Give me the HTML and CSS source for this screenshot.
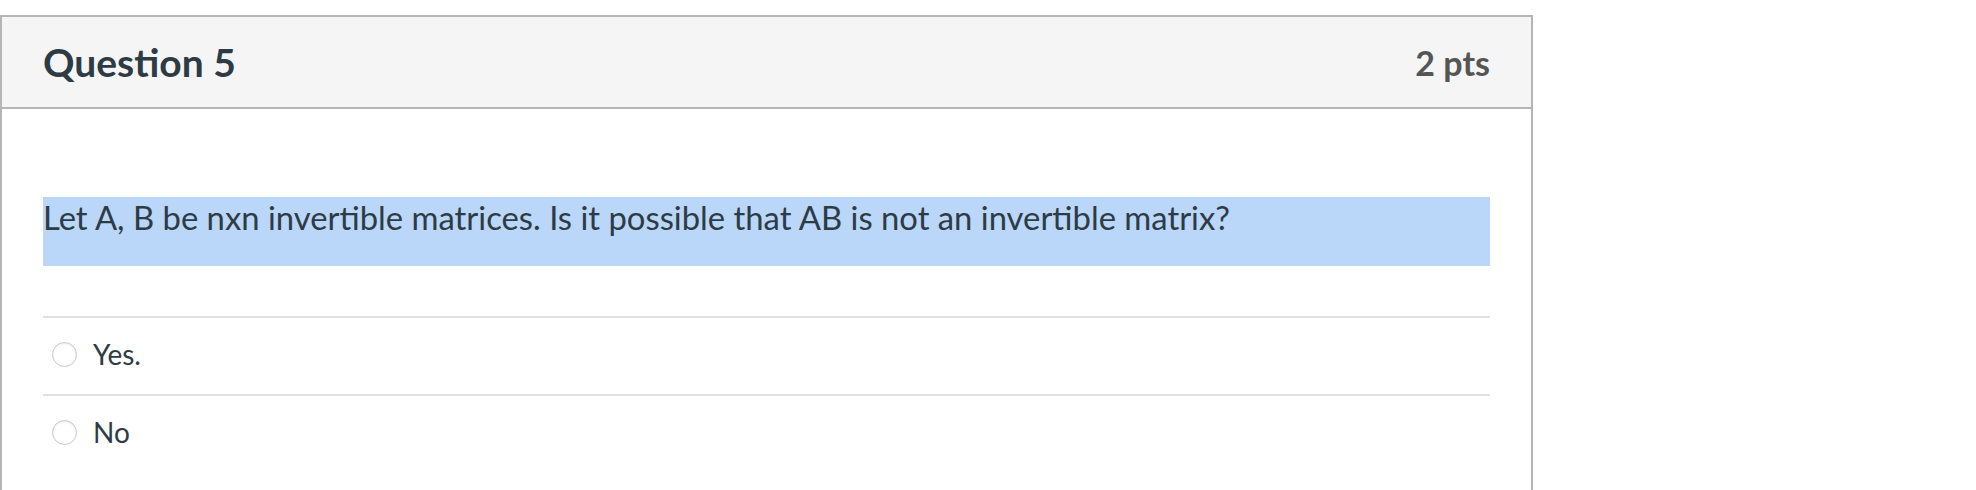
FILE: index.html
```html
<!DOCTYPE html>
<html>
<head>
<meta charset="utf-8">
<link rel="stylesheet" href="styles.css">
</head>
<body>
<div class="card">
  <div class="header">
    <span class="title">Question 5</span>
    <span class="pts">2 pts</span>
  </div>
  <div class="content">
    <div class="question-text">Let A, B be nxn invertible matrices. Is it possible that AB is not an invertible matrix?</div>
    <div class="answers">
      <label class="answer"><span class="radio"></span><span class="answer-text">Yes.</span></label>
      <label class="answer"><span class="radio"></span><span class="answer-text">No</span></label>
    </div>
  </div>
</div>
</body>
</html>
```

FILE: styles.css
```css
html, body {
  margin: 0;
  padding: 0;
  background: #ffffff;
}
body {
  font-family: Lato, "Liberation Sans", sans-serif;
  color: #2d3b45;
  height: 490px;
  overflow: hidden;
}
.card {
  margin-top: 15px;
  width: 1529px;
  height: 473px;
  border: 2px solid #b5b5b5;
  border-bottom: none;
  background: #ffffff;
}
.header {
  height: 90px;
  background: #f5f5f5;
  border-bottom: 2px solid #b5b5b5;
  display: flex;
  align-items: center;
  justify-content: space-between;
  padding: 0 41px;
}
.title {
  font-size: 39px;
  font-weight: 700;
  color: #2d3b45;
}
.pts {
  font-size: 34px;
  font-weight: 700;
  color: #555555;
}
.content {
  padding: 88px 41px 0 41px;
}
.question-text {
  background: #bad6f9;
  font-size: 32.8px;
  line-height: 40px;
  height: 68px;
  padding-top: 1px;
}
.answers {
  margin-top: 50px;
}
.answer {
  display: flex;
  align-items: center;
  height: 72px;
  padding-bottom: 4px;
  border-top: 2px solid #e0e0e0;
}
.radio {
  width: 23px;
  height: 23px;
  border: 1px solid #c8c8c8;
  border-radius: 50%;
  margin-left: 9px;
  margin-right: 16px;
  box-shadow: inset 0 1px 2px rgba(0,0,0,0.08);
  background: #ffffff;
}
.answer-text {
  font-size: 28px;
}
```
